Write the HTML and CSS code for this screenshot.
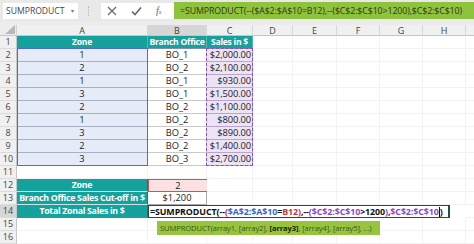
FILE: index.html
```html
<!DOCTYPE html>
<html>
<head>
<meta charset="utf-8">
<link rel="stylesheet" href="styles.css">
</head>
<body>
<div class="app">
  <div class="fbar">
    <div class="namebox"><span class="nb-text">SUMPRODUCT</span><span class="nb-arrow">▾</span></div>
    <div class="grip"></div>
    <div class="fbtns">
      <svg class="ic" width="10" height="10" viewBox="0 0 10 10"><path d="M1 1L9 9M9 1L1 9" stroke="#666" stroke-width="1.2" fill="none"/></svg>
      <svg class="ic" width="11" height="10" viewBox="0 0 11 10"><path d="M1 5.5L4 8.5L10 1.5" stroke="#666" stroke-width="1.6" fill="none"/></svg>
      <span class="fx">f<sub>x</sub></span>
    </div>
    <div class="formula">=SUMPRODUCT(--($A$2:$A$10=B12),--($C$2:$C$10&gt;1200),$C$2:$C$10)</div>
  </div>
  <div class="gap"></div>
  <div class="sheet">
    <div class="grid">
      <div class="corner"><svg width="10" height="9" viewBox="0 0 10 9"><path d="M10 0L10 9L0 9Z" fill="#b8b8b8"/></svg></div>
      <div class="ch">A</div><div class="ch ch-act">B</div><div class="ch">C</div><div class="ch">D</div><div class="ch">E</div><div class="ch">F</div><div class="ch">G</div><div class="ch">H</div><div class="ch"></div>

      <div class="rh">1</div><div class="c hd">Zone</div><div class="c hd">Branch Office</div><div class="c hd">Sales in $</div><div class="c e"></div><div class="c e"></div><div class="c e"></div><div class="c e"></div><div class="c e"></div><div class="c e"></div>

      <div class="rh">2</div><div class="c za">1</div><div class="c br">BO_1</div><div class="c sa">$2,000.00</div><div class="c e"></div><div class="c e"></div><div class="c e"></div><div class="c e"></div><div class="c e"></div><div class="c e"></div>
      <div class="rh">3</div><div class="c za">2</div><div class="c br">BO_2</div><div class="c sa">$2,100.00</div><div class="c e"></div><div class="c e"></div><div class="c e"></div><div class="c e"></div><div class="c e"></div><div class="c e"></div>
      <div class="rh">4</div><div class="c za">1</div><div class="c br">BO_1</div><div class="c sa">$930.00</div><div class="c e"></div><div class="c e"></div><div class="c e"></div><div class="c e"></div><div class="c e"></div><div class="c e"></div>
      <div class="rh">5</div><div class="c za">3</div><div class="c br">BO_1</div><div class="c sa">$1,500.00</div><div class="c e"></div><div class="c e"></div><div class="c e"></div><div class="c e"></div><div class="c e"></div><div class="c e"></div>
      <div class="rh">6</div><div class="c za">2</div><div class="c br">BO_2</div><div class="c sa">$1,100.00</div><div class="c e"></div><div class="c e"></div><div class="c e"></div><div class="c e"></div><div class="c e"></div><div class="c e"></div>
      <div class="rh">7</div><div class="c za">1</div><div class="c br">BO_2</div><div class="c sa">$800.00</div><div class="c e"></div><div class="c e"></div><div class="c e"></div><div class="c e"></div><div class="c e"></div><div class="c e"></div>
      <div class="rh">8</div><div class="c za">3</div><div class="c br">BO_2</div><div class="c sa">$890.00</div><div class="c e"></div><div class="c e"></div><div class="c e"></div><div class="c e"></div><div class="c e"></div><div class="c e"></div>
      <div class="rh">9</div><div class="c za">2</div><div class="c br">BO_2</div><div class="c sa">$1,400.00</div><div class="c e"></div><div class="c e"></div><div class="c e"></div><div class="c e"></div><div class="c e"></div><div class="c e"></div>
      <div class="rh">10</div><div class="c za">3</div><div class="c br">BO_3</div><div class="c sa">$2,700.00</div><div class="c e"></div><div class="c e"></div><div class="c e"></div><div class="c e"></div><div class="c e"></div><div class="c e"></div>

      <div class="rh">11</div><div class="c e"></div><div class="c e"></div><div class="c e"></div><div class="c e"></div><div class="c e"></div><div class="c e"></div><div class="c e"></div><div class="c e"></div><div class="c e"></div>
      <div class="rh">12</div><div class="c lb">Zone</div><div class="c crit">2</div><div class="c e"></div><div class="c e"></div><div class="c e"></div><div class="c e"></div><div class="c e"></div><div class="c e"></div><div class="c e"></div>
      <div class="rh">13</div><div class="c lb">Branch Office Sales Cut-off in $</div><div class="c cut">$1,200</div><div class="c e"></div><div class="c e"></div><div class="c e"></div><div class="c e"></div><div class="c e"></div><div class="c e"></div><div class="c e"></div>
      <div class="rh rh-act">14</div><div class="c lb lb-last">Total Zonal Sales in $</div><div class="c edit"><span class="k">=SUMPRODUCT(--</span><span class="rd">(</span><span class="bl">$A$2:$A$10</span><span class="k">=</span><span class="rd">B12)</span><span class="k">,--</span><span class="pu">($C$2:$C$10</span><span class="k">&gt;1200</span><span class="pu">)</span><span class="k">,</span><span class="pu">$C$2:$C$10</span><span class="caret"></span><span class="k">)</span></div><div class="c e"></div>
      <div class="rh">15</div><div class="c e"></div><div class="c e"></div><div class="c e"></div><div class="c e"></div><div class="c e"></div><div class="c e"></div><div class="c e"></div><div class="c e"></div><div class="c e"></div>
      <div class="rh">16</div><div class="c e"></div><div class="c e"></div><div class="c e"></div><div class="c e"></div><div class="c e"></div><div class="c e"></div><div class="c e"></div><div class="c e"></div><div class="c e"></div>
    </div>
    <div class="overlay">
      <div class="rng-a"></div>
      <div class="rng-c"></div>
    </div>
    <div class="tip">SUMPRODUCT(array1, [array2], <b>[array3]</b>, [array4], [array5], ...)</div>
  </div>
</div>
</body>
</html>
```

FILE: styles.css
```css
html, body {
  margin: 0;
  padding: 0;
  background: #ffffff;
}
.app {
  width: 474px;
  height: 244px;
  overflow: hidden;
  font-family: "Open Sans", "Noto Sans", sans-serif;
  background: #ffffff;
}
.fbar {
  height: 21px;
  background: #e9e9e9;
  display: flex;
  align-items: center;
  padding-left: 3px;
}
.namebox {
  width: 75px;
  height: 16px;
  background: #ffffff;
  display: flex;
  align-items: center;
  justify-content: space-between;
  padding: 0 4px 0 3px;
  box-sizing: border-box;
  font-size: 8.6px;
  color: #444;
}
.nb-arrow {
  font-size: 6px;
  color: #777;
}
.grip {
  width: 1px;
  height: 10px;
  margin-left: 10px;
  border-left: 1px dotted #b8b8b8;
}
.fbtns {
  margin-left: 11px;
  width: 73px;
  height: 16px;
  background: #ffffff;
  display: flex;
  align-items: center;
  box-sizing: border-box;
  padding-left: 6px;
  gap: 14px;
}
.fx {
  font-family: "Liberation Serif", serif;
  font-style: italic;
  font-size: 10px;
  color: #666;
}
.fx sub {
  font-size: 6px;
  vertical-align: 0;
}
.formula {
  flex: 1;
  height: 17px;
  background: #8fc33e;
  color: #2a3a10;
  font-size: 8.8px;
  display: flex;
  align-items: center;
  padding-left: 6px;
  white-space: nowrap;
  overflow: hidden;
  letter-spacing: -0.1px;
}
.gap {
  height: 4px;
  background: #ececec;
}
.sheet {
  position: relative;
  font-size: 9.3px;
  color: #222;
}
.grid,
.overlay {
  display: grid;
  grid-template-columns: 17px 131px 59px 46px 40px 44px 43px 43px 43px 48px;
  grid-template-rows: 11px repeat(16, 13px);
}
.overlay {
  position: absolute;
  left: 0;
  top: 0;
  pointer-events: none;
}
.corner {
  background: #ededed;
  border-right: 1px solid #d4d4d4;
  border-bottom: 1px solid #c6c6c6;
  box-sizing: border-box;
  display: flex;
  align-items: flex-end;
  justify-content: flex-end;
  padding: 0 1px 1px 0;
}
.ch {
  background: #f0f0f0;
  border-right: 1px solid #d8d8d8;
  border-bottom: 1px solid #c6c6c6;
  box-sizing: border-box;
  text-align: center;
  line-height: 11px;
  color: #444;
  font-size: 9px;
}
.ch-act {
  background: #d6d6d6;
}
.rh {
  background: #f0f0f0;
  border-right: 1px solid #c6c6c6;
  border-bottom: 1px solid #dcdcdc;
  box-sizing: border-box;
  text-align: center;
  line-height: 12px;
  color: #444;
  font-size: 9px;
}
.rh-act {
  background: #d6d6d6;
}
.c {
  box-sizing: border-box;
  line-height: 12px;
  white-space: nowrap;
  border-right: 1px solid #f2f2f2;
  border-bottom: 1px solid #f2f2f2;
  min-width: 0;
}
.e {
  background: #ffffff;
}
.hd {
  background: #16a29c;
  color: #ffffff;
  font-weight: 700;
  text-align: center;
  border-right: 1px solid #4cbab4;
  border-bottom: 1px solid #7d8fb5;
  font-size: 8.6px;
  letter-spacing: -0.25px;
}
.za {
  background: #e6ecf7;
  text-align: center;
  border-right: 1px solid #8ea6d6;
  border-bottom: 1px solid #a6b1c6;
}
.br {
  background: #ffffff;
  text-align: center;
  border-right: 1px solid #c9c9c9;
  border-bottom: 1px solid #c9c9c9;
}
.sa {
  background: #ece3f4;
  text-align: right;
  padding-right: 1px;
  border-right: 1px solid #b598d6;
  border-bottom: 1px solid #b8a4cf;
  letter-spacing: -0.1px;
}
.lb {
  background: #16a29c;
  color: #ffffff;
  font-weight: 700;
  text-align: center;
  border-right: 1px solid #2f6f6c;
  border-bottom: 1px solid #c7e6e4;
  font-size: 8.8px;
  letter-spacing: -0.3px;
}
.lb-last {
  border-bottom: 1px solid #16a29c;
}
.crit {
  background: #fbe1e1;
  text-align: center;
  border: 1px solid #c9545a;
  margin-right: -1px;
  line-height: 11px;
}
.cut {
  background: #ffffff;
  text-align: center;
  border-right: 1px solid #aaaaaa;
  border-bottom: 1px solid #aaaaaa;
}
.edit {
  grid-column: span 7;
  background: #ffffff;
  border: 1px solid #1d4f4e;
  border-width: 1px 2px 1px 1px;
  margin-right: 16px;
  font-weight: 700;
  line-height: 11px;
  font-size: 8.9px;
  letter-spacing: -0.1px;
  padding-left: 1px;
  position: relative;
  z-index: 2;
}
.k { color: #111; }
.bl { color: #3b62c8; }
.rd { color: #d0343f; }
.pu { color: #8a49c4; }
.caret {
  display: inline-block;
  width: 1px;
  height: 10px;
  background: #111;
  vertical-align: -2px;
}
.rng-a {
  grid-column: 2;
  grid-row: 3 / span 9;
  border: 1px solid #4a6fd0;
  margin-top: -1px;
}
.rng-c {
  grid-column: 4;
  grid-row: 3 / span 9;
  border: 1px dashed #8a4fc8;
  margin: -1px 0 0 -1px;
}
.tip {
  position: absolute;
  left: 157px;
  top: 196px;
  height: 14px;
  width: 223px;
  box-sizing: border-box;
  background: #97c43d;
  color: #3f5220;
  font-size: 7.6px;
  line-height: 14px;
  padding-left: 3px;
  white-space: nowrap;
  letter-spacing: -0.1px;
  z-index: 3;
}
.tip b {
  color: #1b2608;
}
```
